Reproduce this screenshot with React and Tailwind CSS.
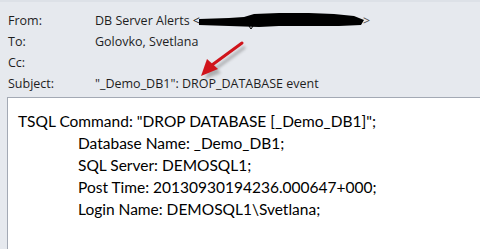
import React from "react";

const headerRows = [
  ["From:", "DB Server Alerts <"],
  ["To:", "Golovko, Svetlana"],
  ["Cc:", ""],
  ["Subject:", "\"_Demo_DB1\": DROP_DATABASE event"],
];

const App = () => {
  return (
    <div className="w-[480px] h-[249px] bg-[#e6e9ee] overflow-hidden relative">
      <div className="h-[2px] bg-[#dde1e7]" />
      <div
        className="pt-[9px] pl-[8px] h-[95px] text-[12.5px] text-[#1e1e1e]"
        style={{ fontFamily: '"Open Sans", sans-serif' }}
      >
        {headerRows.map(([label, value]) => (
          <div key={label} className="flex h-[21px] items-center">
            <span className="w-[87px] shrink-0">{label}</span>
            <span className="flex items-center shrink-0">
              {value}
              {label === "From:" && (
                <>
                  <svg
                    width="168"
                    height="18"
                    viewBox="0 0 168 18"
                    className="-ml-[1px] shrink-0 block"
                  >
                    <path
                      d="M0 6 L30 5 L45 4 L55 1 L80 0 L110 0 L135 1 L155 3 L165 7 L162 12 L140 13 L110 13 L80 13 L60 14 L30 13 L0 12 Z"
                      fill="#000"
                    />
                    <path d="M50 13 L52 16 L54 13" stroke="#000" strokeWidth="1" fill="none" />
                  </svg>
                  <span className="-ml-[4px] text-[#555]">&gt;</span>
                </>
              )}
            </span>
          </div>
        ))}
      </div>
      <div className="ml-[7px] h-[152px] bg-white border-l border-t border-[#a3a9b4]">
        <div
          className="pt-[12px] pl-[10px] text-[15.5px] leading-[22px] text-black"
          style={{ fontFamily: '"Lato", "Liberation Sans", sans-serif' }}
        >
          <div>TSQL Command: "DROP DATABASE [_Demo_DB1]";</div>
          <div className="pl-[60px]">
            <div>Database Name: _Demo_DB1;</div>
            <div>SQL Server: DEMOSQL1;</div>
            <div>Post Time: 20130930194236.000647+000;</div>
            <div>Login Name: DEMOSQL1\Svetlana;</div>
          </div>
        </div>
      </div>
      <svg
        className="absolute left-[190px] top-[36px]"
        width="64"
        height="48"
        viewBox="0 0 64 48"
      >
        <defs>
          <filter id="sh" x="-50%" y="-50%" width="200%" height="200%">
            <feGaussianBlur stdDeviation="1.5" />
          </filter>
        </defs>
        <g filter="url(#sh)" opacity="0.45" transform="translate(3,3)">
          <path d="M52 8 L22 30" stroke="#666" strokeWidth="3" />
          <path d="M12 40 L18 24 L28 34 Z" fill="#666" />
        </g>
        <path d="M52 7 L22 29" stroke="#d0141b" strokeWidth="3" strokeLinecap="round" />
        <path d="M11 40 L17 23 L28 33 Z" fill="#d0141b" />
      </svg>
    </div>
  );
};

export default App;
